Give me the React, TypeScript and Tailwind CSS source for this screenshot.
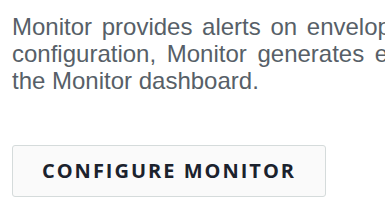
export default function App() {
    return (
        <div className="w-[385px] h-[208px] overflow-hidden bg-white">
            <div className="pl-3 pt-[13px]">
                {/* Description */}
                <p
                    className="text-[24px] leading-[27px] text-[#575f68] whitespace-nowrap"
                    style={{ fontFamily: '"Liberation Sans", Arial, sans-serif' }}
                >
                    <span className="block [word-spacing:3px]">
                        Monitor provides alerts on envelope protection anomalies.
                    </span>
                    <span className="block [word-spacing:4px]">
                        configuration, Monitor generates events that are displayed in
                    </span>
                    <span className="block">the Monitor dashboard.</span>
                </p>

                <button
                    className="mt-[51px] w-[314px] h-[52px] flex items-center justify-center bg-[#fafafa] border border-[#d5dbdb] rounded-[3px] text-[20px] font-bold tracking-[2px] text-[#1b222d]"
                    style={{ fontFamily: '"Open Sans", sans-serif' }}
                >
                    CONFIGURE MONITOR
                </button>
            </div>
        </div>
    );
}
